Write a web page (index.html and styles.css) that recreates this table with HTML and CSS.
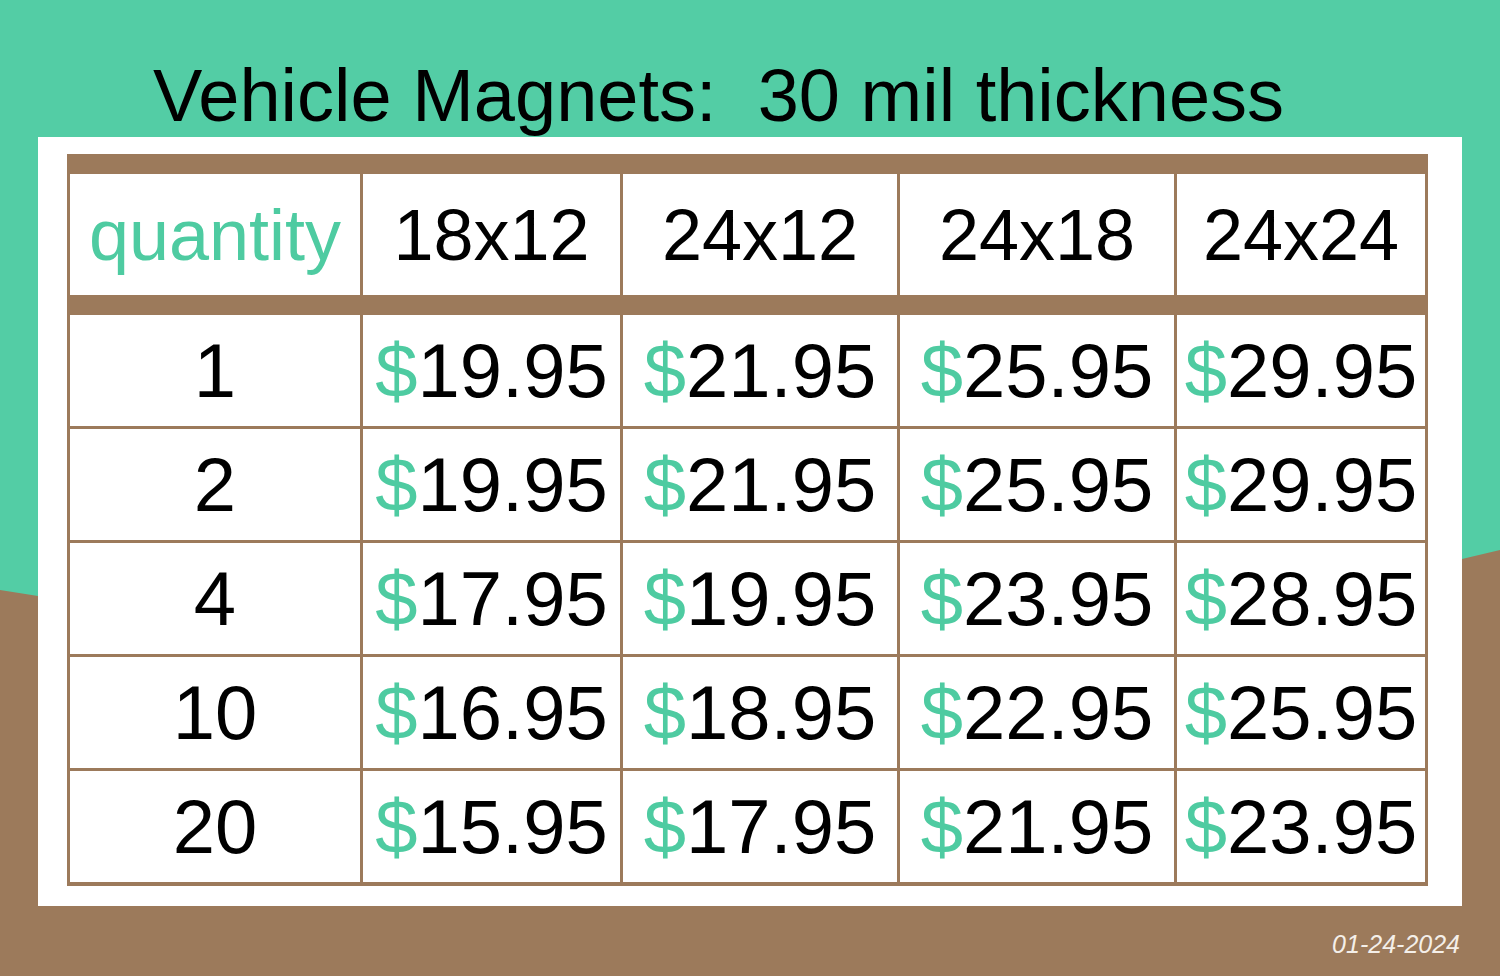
FILE: index.html
```html
<!DOCTYPE html>
<html>
<head>
<meta charset="utf-8">
<link rel="stylesheet" href="styles.css">
</head>
<body>
<div class="page">
  <h1 class="title">Vehicle Magnets:&nbsp; 30 mil thickness</h1>
  <div class="card">
    <div class="grid">
      <div class="cell head qty">quantity</div>
      <div class="cell head">18x12</div>
      <div class="cell head">24x12</div>
      <div class="cell head">24x18</div>
      <div class="cell head">24x24</div>

      <div class="cell">1</div>
      <div class="cell"><span class="d">$</span>19.95</div>
      <div class="cell"><span class="d">$</span>21.95</div>
      <div class="cell"><span class="d">$</span>25.95</div>
      <div class="cell"><span class="d">$</span>29.95</div>

      <div class="cell">2</div>
      <div class="cell"><span class="d">$</span>19.95</div>
      <div class="cell"><span class="d">$</span>21.95</div>
      <div class="cell"><span class="d">$</span>25.95</div>
      <div class="cell"><span class="d">$</span>29.95</div>

      <div class="cell">4</div>
      <div class="cell"><span class="d">$</span>17.95</div>
      <div class="cell"><span class="d">$</span>19.95</div>
      <div class="cell"><span class="d">$</span>23.95</div>
      <div class="cell"><span class="d">$</span>28.95</div>

      <div class="cell">10</div>
      <div class="cell"><span class="d">$</span>16.95</div>
      <div class="cell"><span class="d">$</span>18.95</div>
      <div class="cell"><span class="d">$</span>22.95</div>
      <div class="cell"><span class="d">$</span>25.95</div>

      <div class="cell">20</div>
      <div class="cell"><span class="d">$</span>15.95</div>
      <div class="cell"><span class="d">$</span>17.95</div>
      <div class="cell"><span class="d">$</span>21.95</div>
      <div class="cell"><span class="d">$</span>23.95</div>
    </div>
  </div>
  <div class="date">01-24-2024</div>
</div>
</body>
</html>
```

FILE: styles.css
```css
html, body {
  margin: 0;
  padding: 0;
}
body {
  font-family: "Liberation Sans", Arial, sans-serif;
  background: #53cda5;
}
.page {
  position: relative;
  width: 1500px;
  height: 976px;
  overflow: hidden;
  background: #53cda5;
  padding-top: 59px;
  box-sizing: border-box;
}
.page::before {
  content: "";
  position: absolute;
  left: 0;
  top: 0;
  width: 1500px;
  height: 976px;
  background: #9c7a5b;
  clip-path: polygon(0 590px, 38px 596px, 750px 590px, 1462px 559px, 1500px 550px, 1500px 976px, 0 976px);
  z-index: 0;
}
.title {
  position: relative;
  z-index: 1;
  margin: 0 0 4px 0;
  padding-left: 153px;
  font-size: 74px;
  line-height: 74px;
  font-weight: normal;
  color: #000;
}
.card {
  position: relative;
  z-index: 1;
  margin-left: 38px;
  width: 1424px;
  height: 769px;
  box-sizing: border-box;
  background: #fff;
  padding: 17px 34px 0 29px;
}
.grid {
  display: grid;
  grid-template-columns: 290px 257px 274px 274px 248px;
  grid-template-rows: 138px repeat(5, 111px);
  column-gap: 3px;
  row-gap: 3px;
  background: #9c7a5b;
  padding: 20px 3px 4px 3px;
  width: 1361px;
  box-sizing: border-box;
}
.cell {
  background: #fff;
  display: flex;
  align-items: center;
  justify-content: center;
  font-size: 76px;
  color: #000;
  line-height: 1;
}
.head {
  font-size: 72px;
  margin-bottom: 17px;
}
.qty {
  color: #4ecba1;
}
.d {
  color: #4ecba1;
}
.date {
  position: relative;
  z-index: 1;
  margin-top: 26px;
  padding-right: 40px;
  text-align: right;
  font-size: 25px;
  line-height: 25px;
  font-style: italic;
  color: #f4efe9;
}
```
